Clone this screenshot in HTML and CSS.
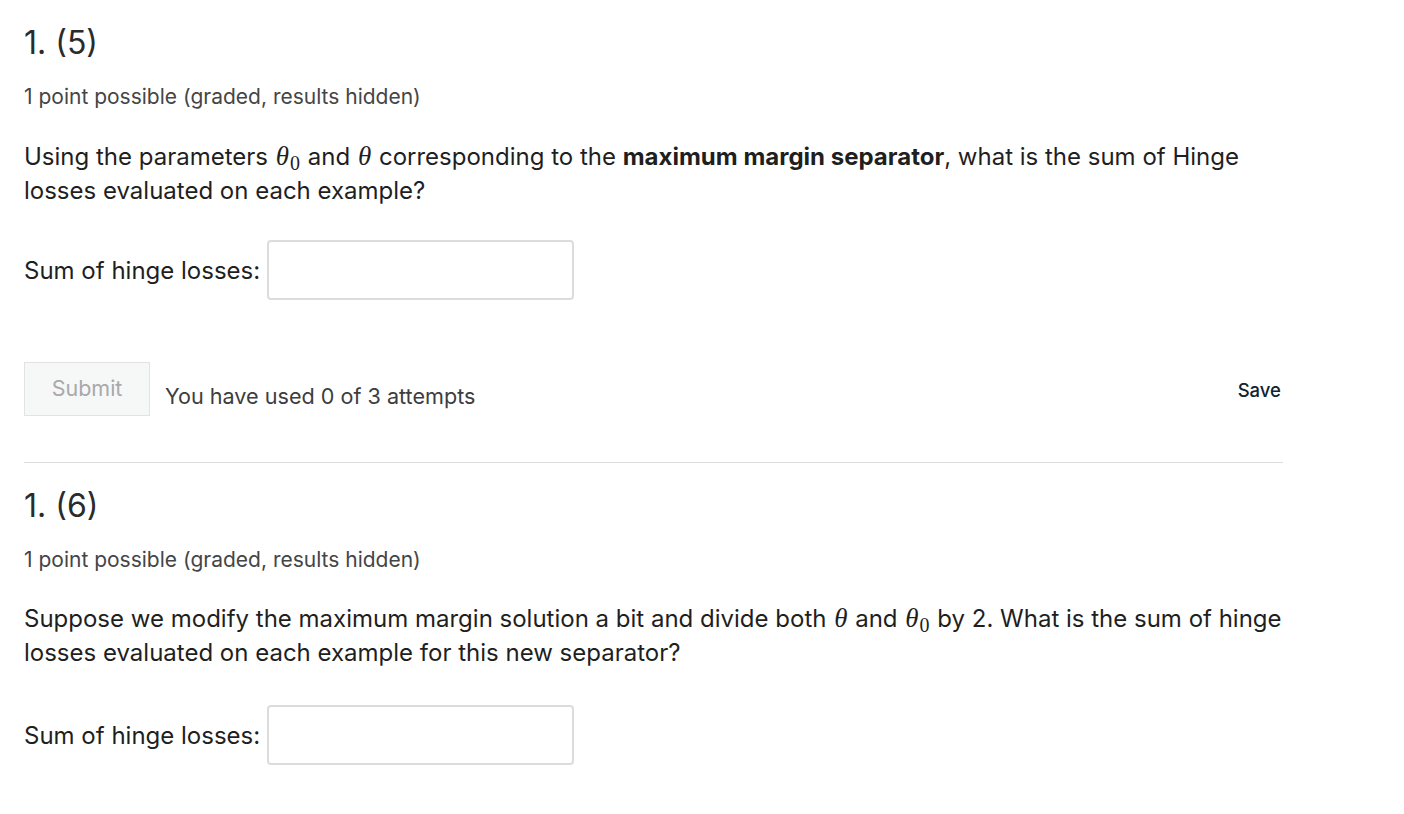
FILE: index.html
```html
<!DOCTYPE html>
<html>
<head>
<meta charset="utf-8">
<link rel="stylesheet" href="styles.css">
</head>
<body>
<div class="page">
  <section class="problem">
    <h2 class="title">1. (5)</h2>
    <div class="points">1 point possible (graded, results hidden)</div>
    <p class="question">Using the parameters <span class="math"><i>θ</i><sub>0</sub></span> and <span class="math"><i>θ</i></span> corresponding to the <b>maximum margin separator</b>, what is the sum of Hinge losses evaluated on each example?</p>
    <div class="answer">
      <label class="label">Sum of hinge losses:</label>
      <input class="input" type="text">
    </div>
    <div class="actions">
      <button class="submit">Submit</button>
      <span class="attempts">You have used 0 of 3 attempts</span>
      <span class="save">Save</span>
    </div>
  </section>
  <hr class="divider">
  <section class="problem second">
    <h2 class="title">1. (6)</h2>
    <div class="points">1 point possible (graded, results hidden)</div>
    <p class="question">Suppose we modify the maximum margin solution a bit and divide both <span class="math"><i>θ</i></span> and <span class="math"><i>θ</i><sub>0</sub></span> by 2. What is the sum of hinge losses evaluated on each example for this new separator?</p>
    <div class="answer">
      <label class="label">Sum of hinge losses:</label>
      <input class="input" type="text">
    </div>
  </section>
</div>
</body>
</html>
```
FILE: styles.css
```css
html, body {
  margin: 0;
  padding: 0;
  background: #ffffff;
}
body {
  font-family: Inter, "Noto Sans", sans-serif;
  color: #1f1f1f;
}
.page {
  width: 1259px;
  padding: 25px 0 0 24px;
}
.title {
  margin: 0;
  font-size: 32px;
  font-weight: 400;
  line-height: 36px;
  color: #2b2b2b;
}
.points {
  margin-top: 24px;
  font-size: 21px;
  line-height: 24px;
  color: #454545;
}
.question {
  margin: 30px 0 0 0;
  width: 1264px;
  font-size: 24px;
  line-height: 34px;
  color: #1f1f1f;
}
.question b {
  font-weight: 700;
}
.math {
  font-family: "Liberation Serif", "DejaVu Serif", serif;
  font-size: 27px;
  white-space: nowrap;
  padding: 0 1px;
}
.math i {
  font-style: italic;
}
.math sub {
  font-size: 20px;
  font-style: normal;
  vertical-align: -5px;
  line-height: 0;
  padding-left: 1px;
}
.answer {
  margin-top: 32px;
  display: flex;
  align-items: center;
  gap: 7px;
}
.label {
  font-size: 24px;
  color: #1f1f1f;
}
.input {
  box-sizing: border-box;
  width: 307px;
  height: 60px;
  border: 2px solid #dcdcdc;
  border-radius: 4px;
  background: #fff;
  margin: 0;
  font-family: inherit;
  font-size: 20px;
  padding: 0 10px;
}
.actions {
  margin-top: 62px;
  display: flex;
  align-items: flex-start;
}
.submit {
  box-sizing: border-box;
  width: 126px;
  height: 54px;
  background: #f6f7f7;
  border: 1px solid #e2e2e2;
  border-radius: 0;
  color: #a9a9a9;
  font-family: inherit;
  font-size: 21.5px;
  padding: 0 0 2px 0;
}
.attempts {
  margin: 22px 0 0 15px;
  font-size: 21.6px;
  line-height: 24px;
  color: #3d3d3d;
}
.save {
  margin: 16px 2px 0 auto;
  font-size: 18.5px;
  line-height: 24px;
  font-weight: 500;
  color: #0d2530;
}
.divider {
  margin: 46px 0 0 0;
  border: 0;
  border-top: 1px solid #dddddd;
  height: 0;
}
.second .title {
  margin-top: 25px;
}
.second .points {
  margin-top: 24px;
}
.second .question {
  margin-top: 29px;
}
.second .answer {
  margin-top: 35px;
}
```
